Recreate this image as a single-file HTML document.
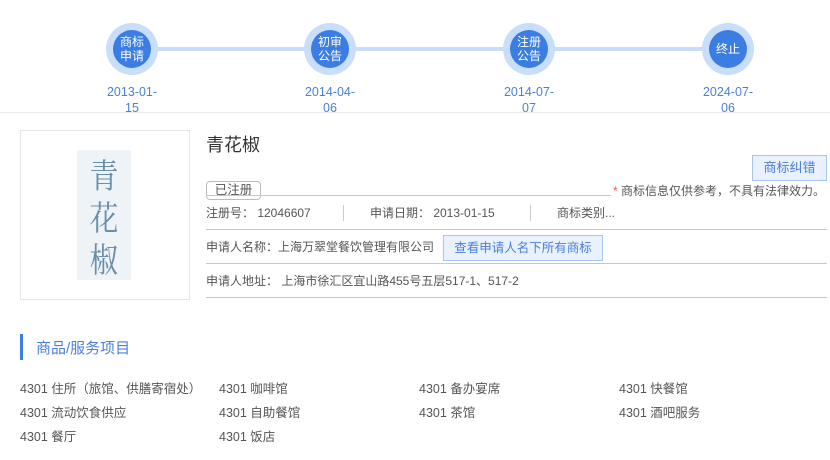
<!DOCTYPE html>
<html><head><meta charset="utf-8"><style>
*{margin:0;padding:0;box-sizing:border-box}
body{width:830px;height:460px;background:#fff;font-family:"Liberation Sans","Noto Sans CJK SC",sans-serif;position:relative;overflow:hidden;color:#555}
.a{position:absolute;white-space:nowrap}
.line{position:absolute;left:132px;top:47px;width:596px;height:4px;background:#c9ddf8}
.c{position:absolute;width:52px;height:52px;border-radius:50%;background:#c9defa;top:23px}
.c div{position:absolute;left:7px;top:7px;width:38px;height:38px;border-radius:50%;background:#3b7de2;color:#fff;font-size:12px;line-height:14px;text-align:center;display:flex;align-items:center;justify-content:center}
.d{position:absolute;top:84px;width:80px;text-align:center;color:#4b7fdb;font-size:12.5px;line-height:16px}
.hr{position:absolute;height:1px;background:#c8c8c8}
.f{font-size:12px;color:#555}
.it{position:absolute;font-size:12.5px;color:#555}
</style></head><body>
<div class="line"></div>
<div class="c" style="left:106px"><div>商标<br>申请</div></div>
<div class="c" style="left:304px"><div>初审<br>公告</div></div>
<div class="c" style="left:503px"><div>注册<br>公告</div></div>
<div class="c" style="left:702px"><div>终止</div></div>
<div class="d" style="left:92px">2013-01-<br>15</div>
<div class="d" style="left:290px">2014-04-<br>06</div>
<div class="d" style="left:489px">2014-07-<br>07</div>
<div class="d" style="left:688px">2024-07-<br>06</div>
<div class="a" style="left:0;top:112px;width:830px;height:1px;background:#ebebeb"></div>

<div class="a" style="left:20px;top:130px;width:170px;height:170px;border:1px solid #e6e6e6"></div>
<div class="a" style="left:77px;top:150px;width:54px;height:130px;background:#eef3f8"></div>
<div class="a" style="left:77px;top:150px;width:54px;height:130px;color:#6a8ea8;font-family:'Noto Serif CJK SC',serif;font-size:34px;line-height:42px;text-align:center;white-space:normal;padding-top:3px;transform:scaleX(0.85)">青<br>花<br>椒</div>

<div class="a" style="left:206px;top:131px;font-size:18px;color:#333">青花椒</div>
<div class="a" style="left:752px;top:155px;width:75px;height:26px;background:#e9f1fd;border:1px solid #a9c5ef;color:#4b7fdb;font-size:13px;line-height:24px;text-align:center">商标纠错</div>
<div class="a" style="left:206px;top:181px;width:55px;height:19px;border:1px solid #bbb;border-radius:4px;font-size:12.5px;line-height:17px;text-align:center;color:#555">已注册</div>
<div class="hr" style="left:206px;top:195px;width:405px"></div>
<div class="a f" style="left:613px;top:182px"><span style="color:#e55">*</span> 商标信息仅供参考，不具有法律效力。</div>
<div class="a f" style="left:206px;top:204px">注册号： 12046607</div>
<div class="a" style="left:343px;top:205px;width:1px;height:16px;background:#ccc"></div>
<div class="a f" style="left:370px;top:204px">申请日期： 2013-01-15</div>
<div class="a" style="left:530px;top:205px;width:1px;height:16px;background:#ccc"></div>
<div class="a f" style="left:557px;top:204px">商标类别...</div>
<div class="hr" style="left:206px;top:229px;width:621px"></div>
<div class="a f" style="left:206px;top:238px">申请人名称：上海万翠堂餐饮管理有限公司</div>
<div class="a" style="left:443px;top:235px;width:160px;height:26px;background:#e9f1fd;border:1px solid #a9c5ef;color:#4b7fdb;font-size:12.5px;line-height:24px;text-align:center">查看申请人名下所有商标</div>
<div class="hr" style="left:206px;top:263px;width:621px"></div>
<div class="a f" style="left:206px;top:272px">申请人地址： 上海市徐汇区宜山路455号五层517-1、517-2</div>
<div class="hr" style="left:206px;top:297px;width:621px"></div>

<div class="a" style="left:20px;top:334px;width:3px;height:26px;background:#3b7de2"></div>
<div class="a" style="left:36px;top:337px;font-size:15px;color:#4b7fdb">商品/服务项目</div>
<div class="it" style="left:20px;top:378px">4301 住所（旅馆、供膳寄宿处）</div>
<div class="it" style="left:219px;top:378px">4301 咖啡馆</div>
<div class="it" style="left:419px;top:378px">4301 备办宴席</div>
<div class="it" style="left:619px;top:378px">4301 快餐馆</div>
<div class="it" style="left:20px;top:402px">4301 流动饮食供应</div>
<div class="it" style="left:219px;top:402px">4301 自助餐馆</div>
<div class="it" style="left:419px;top:402px">4301 茶馆</div>
<div class="it" style="left:619px;top:402px">4301 酒吧服务</div>
<div class="it" style="left:20px;top:426px">4301 餐厅</div>
<div class="it" style="left:219px;top:426px">4301 饭店</div>
</body></html>
